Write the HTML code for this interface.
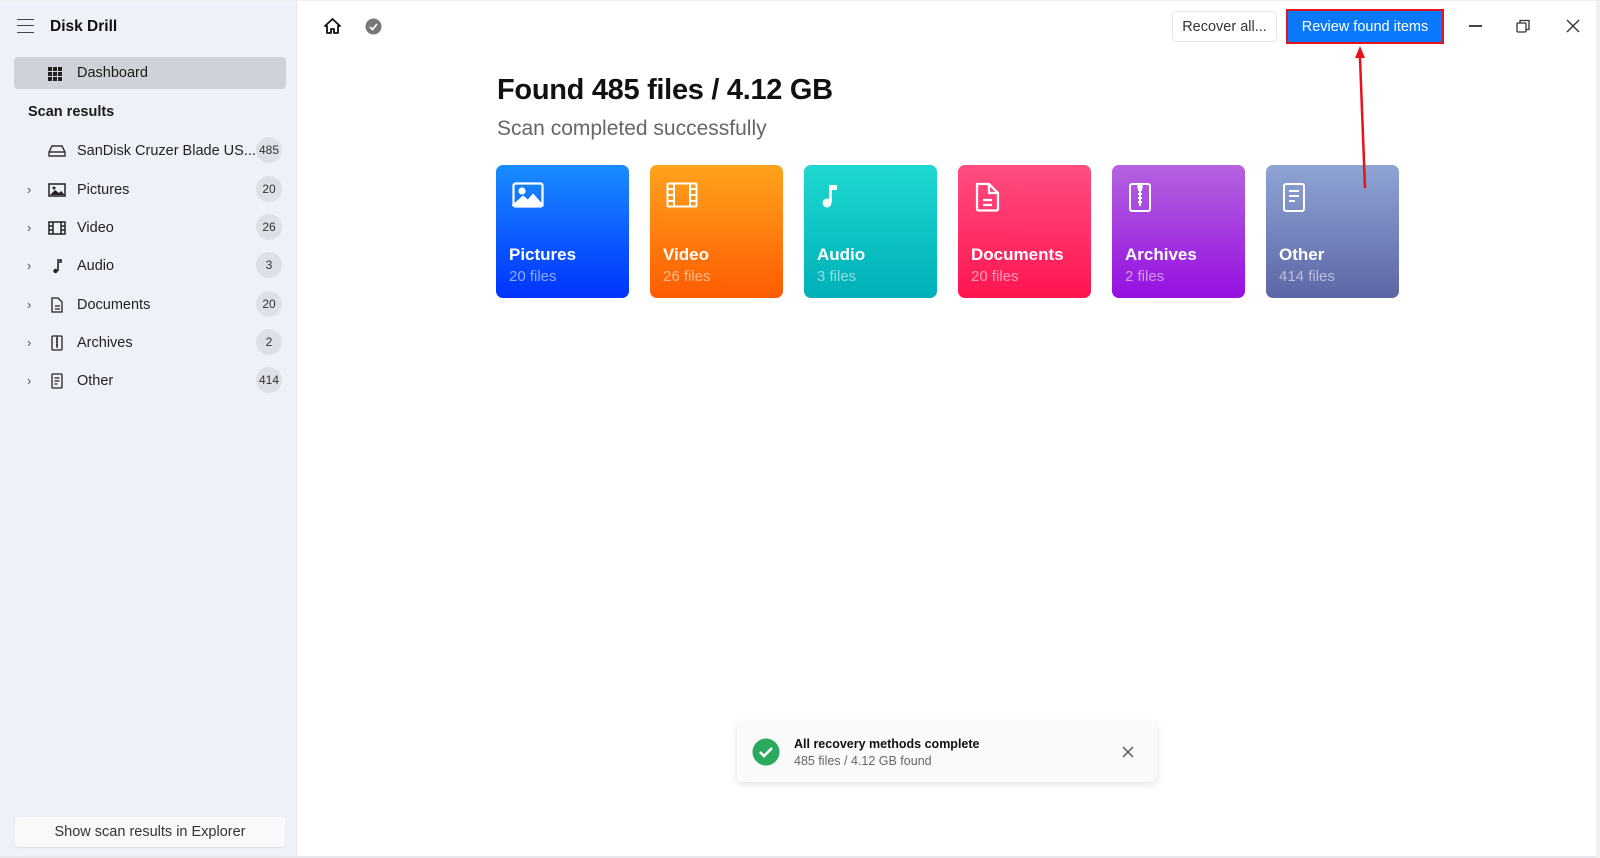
<!DOCTYPE html>
<html><head><meta charset="utf-8"><style>
*{box-sizing:border-box;margin:0;padding:0}
body{width:1600px;height:858px;overflow:hidden;background:#fff;font-family:"Liberation Sans",sans-serif;position:relative;color:#1a1a1a}
.sb{position:absolute;left:0;top:0;width:297px;height:858px;background:#eef1f8;border-right:1px solid #e4e6ec}
.abs{position:absolute}
.row{position:absolute;left:0;width:297px;height:34px;font-size:14.5px;color:#222}
.row .t{position:absolute;left:77px;top:10px;white-space:nowrap}
.row .b{position:absolute;right:15px;top:4px;min-width:26px;height:26px;border-radius:13px;background:#dde0e6;font-size:12px;line-height:26px;text-align:center;color:#333;padding:0 3px}
.row .c{position:absolute;left:27px;top:10px;font-size:13px;color:#555}
.row svg{position:absolute;left:48px;top:10px}
.card{position:absolute;top:165px;width:133px;height:133px;border-radius:7px;color:#fff}
.card .n{position:absolute;left:13px;top:80px;font-size:17px;font-weight:bold}
.card .s{position:absolute;left:13px;top:103px;font-size:15px;color:rgba(255,255,255,.55)}
.card svg{position:absolute;left:16px;top:17px}
</style></head><body>
<div class="sb">
 <div class="abs" style="left:17px;top:19px;width:17px;height:14px;border-top:1.5px solid #444;border-bottom:1.5px solid #444"><div style="margin-top:5px;border-top:1.5px solid #444"></div></div>
 <div class="abs" style="left:50px;top:18px;font-size:15.5px;font-weight:bold;color:#111">Disk Drill</div>
 <div class="abs" style="left:14px;top:57px;width:272px;height:32px;background:#cfd2d8;border-radius:4px"></div>
 <svg class="abs" style="left:48px;top:67px" width="14" height="14" viewBox="0 0 14 14" fill="#222"><rect x="0" y="0" width="4" height="4"/><rect x="5" y="0" width="4" height="4"/><rect x="10" y="0" width="4" height="4"/><rect x="0" y="5" width="4" height="4"/><rect x="5" y="5" width="4" height="4"/><rect x="10" y="5" width="4" height="4"/><rect x="0" y="10" width="4" height="4"/><rect x="5" y="10" width="4" height="4"/><rect x="10" y="10" width="4" height="4"/></svg>
 <div class="abs" style="left:77px;top:65px;font-size:14.5px">Dashboard</div>
 <div class="abs" style="left:28px;top:104px;font-size:14.5px;font-weight:bold">Scan results</div>
 <div class="row" style="top:133px"><svg width="18" height="16" viewBox="0 0 18 16" fill="none" stroke="#333" stroke-width="1.4"><path d="M4 3h10l3 6v4H1V9z M1 9h16"/></svg><span class="t">SanDisk Cruzer Blade US...</span><span class="b">485</span></div>
 <div class="row" style="top:172px"><span class="c">›</span><svg width="18" height="16" viewBox="0 0 18 16"><rect x="1" y="2" width="16" height="12" fill="none" stroke="#222" stroke-width="1.5"/><path d="M2 13l5-5 4 3 2-2 4 4z" fill="#222"/><circle cx="6" cy="6" r="1.5" fill="#222"/></svg><span class="t">Pictures</span><span class="b">20</span></div>
 <div class="row" style="top:210px"><span class="c">›</span><svg width="18" height="16" viewBox="0 0 18 16" fill="none" stroke="#222" stroke-width="1.5"><rect x="1" y="2" width="16" height="12"/><path d="M5 2v12M13 2v12M1 6h4M1 10h4M13 6h4M13 10h4"/></svg><span class="t">Video</span><span class="b">26</span></div>
 <div class="row" style="top:248px"><span class="c">›</span><svg width="18" height="16" viewBox="0 0 18 16"><path d="M9 2h4v2h-3v9" fill="none" stroke="#222" stroke-width="1.6"/><circle cx="7.5" cy="13" r="2.2" fill="#222"/></svg><span class="t">Audio</span><span class="b">3</span></div>
 <div class="row" style="top:287px"><span class="c">›</span><svg width="18" height="16" viewBox="0 0 18 16" fill="none" stroke="#222" stroke-width="1.3"><path d="M4 1h6l4 4v10H4z M7 9h5M7 12h5"/></svg><span class="t">Documents</span><span class="b">20</span></div>
 <div class="row" style="top:325px"><span class="c">›</span><svg width="18" height="16" viewBox="0 0 18 16" fill="none" stroke="#222" stroke-width="1.3"><rect x="4" y="1" width="10" height="14" rx="1"/><path d="M9 1v12M8 4h2M8 7h2M8 10h2"/></svg><span class="t">Archives</span><span class="b">2</span></div>
 <div class="row" style="top:363px"><span class="c">›</span><svg width="18" height="16" viewBox="0 0 18 16" fill="none" stroke="#222" stroke-width="1.3"><rect x="4" y="1" width="10" height="14" rx="1"/><path d="M6.5 5h5M6.5 8h5M6.5 11h3"/></svg><span class="t">Other</span><span class="b">414</span></div>
 <div class="abs" style="left:15px;top:817px;width:270px;height:30px;background:#f8f9fb;border-radius:3px;box-shadow:0 1px 1px rgba(0,0,0,.08);font-size:14.5px;text-align:center;line-height:31px;color:#333">Show scan results in Explorer</div>
</div>
<div class="abs" style="left:0;top:856px;width:1600px;height:2px;background:#e6e8ec"></div>
<div class="abs" style="left:1596px;top:0;width:4px;height:858px;background:#f0f0f0"></div>
<div class="abs" style="left:0;top:0;width:1600px;height:1px;background:#eee"></div>
<svg class="abs" style="left:324px;top:18px" width="17" height="16" viewBox="0 0 17 16"><path d="M8.5 1L1 8h2v7h4v-4h3v4h4V8h2z" fill="none" stroke="#111" stroke-width="1.8" stroke-linejoin="round"/></svg>
<svg class="abs" style="left:365px;top:18px" width="17" height="17" viewBox="0 0 17 17"><circle cx="8.5" cy="8.5" r="8" fill="#777"/><path d="M5 9l2.5 2.5L12 6" fill="none" stroke="#fff" stroke-width="1.6"/></svg>
<div class="abs" style="left:1172px;top:11px;width:105px;height:31px;border:1px solid #e6e6e6;border-radius:4px;font-size:14.5px;line-height:31px;text-align:center;color:#333">Recover all...</div>
<div class="abs" style="left:1286px;top:9px;width:158px;height:35px;border:2px solid #e8121a;background:#0a78fa;color:#fff;font-size:14.5px;line-height:33px;text-align:center">Review found items</div>
<div class="abs" style="left:1469px;top:25px;width:13px;height:1.5px;background:#444"></div>
<svg class="abs" style="left:1516px;top:19px" width="15" height="14" viewBox="0 0 15 14" fill="none" stroke="#333" stroke-width="1.3"><rect x="1" y="4" width="9" height="9" rx="1"/><path d="M4 4V1.5h9v9h-3"/></svg>
<svg class="abs" style="left:1566px;top:19px" width="14" height="14" viewBox="0 0 14 14" stroke="#333" stroke-width="1.4"><path d="M1 1l12 12M13 1L1 13"/></svg>
<div class="abs" style="left:497px;top:74px;font-size:29px;font-weight:bold;color:#111;letter-spacing:-0.3px">Found 485 files / 4.12 GB</div>
<div class="abs" style="left:497px;top:117px;font-size:21px;color:#666">Scan completed successfully</div>

<div class="card" style="left:496px;background:linear-gradient(#1a8cff,#0033ff)"><svg width="32" height="26" viewBox="0 0 32 26" fill="none" stroke="#fff" stroke-width="2.2"><rect x="1.5" y="1.5" width="29" height="23" rx="2"/><circle cx="10" cy="9" r="2.5" fill="#fff"/><path d="M2 23l9-8 5 4 5-6 9 10z" fill="#fff"/></svg><div class="n">Pictures</div><div class="s">20 files</div></div>
<div class="card" style="left:650px;background:linear-gradient(#ffa31c,#ff5c02)"><svg width="32" height="26" viewBox="0 0 32 26" fill="none" stroke="#fff" stroke-width="2"><rect x="1.5" y="1.5" width="29" height="23" rx="1"/><path d="M8 1.5v23M24 1.5v23M1.5 7h6.5M1.5 13h6.5M1.5 19h6.5M24 7h6.5M24 13h6.5M24 19h6.5"/></svg><div class="n">Video</div><div class="s">26 files</div></div>
<div class="card" style="left:804px;background:linear-gradient(#1dd8d0,#00b0b8)"><svg width="32" height="28" viewBox="0 0 32 28"><path d="M9 20V3h8v5h-5v12" fill="#fff"/><circle cx="7" cy="21" r="4.5" fill="#fff"/></svg><div class="n">Audio</div><div class="s">3 files</div></div>
<div class="card" style="left:958px;background:linear-gradient(#ff4d80,#ff1550)"><svg width="32" height="30" viewBox="0 0 32 30" fill="none" stroke="#fff" stroke-width="2.2"><path d="M3 2h12l9 9v16a1.5 1.5 0 0 1-1.5 1.5h-18A1.5 1.5 0 0 1 3 27z M15 2v9h9 M9 18h9M9 23h9"/></svg><div class="n">Documents</div><div class="s">20 files</div></div>
<div class="card" style="left:1112px;background:linear-gradient(#b463e0,#9510e0)"><svg width="32" height="30" viewBox="0 0 32 30" fill="none" stroke="#fff" stroke-width="2"><rect x="2" y="2" width="20" height="27" rx="2"/><path d="M12 2v22M10 8h4M10 12h4M10 16h4M10 20h4"/><circle cx="12" cy="5" r="1.8"/></svg><div class="n">Archives</div><div class="s">2 files</div></div>
<div class="card" style="left:1266px;background:linear-gradient(#8fa4d4,#5d66a6)"><svg width="32" height="30" viewBox="0 0 32 30" fill="none" stroke="#fff" stroke-width="2"><rect x="2" y="2" width="20" height="27" rx="2"/><path d="M7 9h10M7 14h10M7 19h6"/></svg><div class="n">Other</div><div class="s">414 files</div></div>

<svg class="abs" style="left:0;top:0" width="1600" height="858"><path d="M1365 188L1360 58" stroke="#e8121a" stroke-width="2.5"/><path d="M1360 46l-5 12h10z" fill="#e8121a"/></svg>

<div class="abs" style="left:737px;top:722px;width:420px;height:60px;background:#fafafa;border-radius:5px;box-shadow:0 2px 8px rgba(0,0,0,.12)">
 <svg class="abs" style="left:15px;top:16px" width="28" height="28" viewBox="0 0 28 28"><circle cx="14" cy="14" r="13.5" fill="#2aaa5e"/><path d="M8 14l4 4 8-8" fill="none" stroke="#fff" stroke-width="2.6"/></svg>
 <div class="abs" style="left:57px;top:15px;font-size:12.5px;font-weight:bold;color:#111">All recovery methods complete</div>
 <div class="abs" style="left:57px;top:32px;font-size:12.5px;color:#666">485 files / 4.12 GB found</div>
 <svg class="abs" style="left:385px;top:24px" width="12" height="12" viewBox="0 0 12 12" stroke="#555" stroke-width="1.4"><path d="M1 1l10 10M11 1L1 11"/></svg>
</div>
</body></html>
